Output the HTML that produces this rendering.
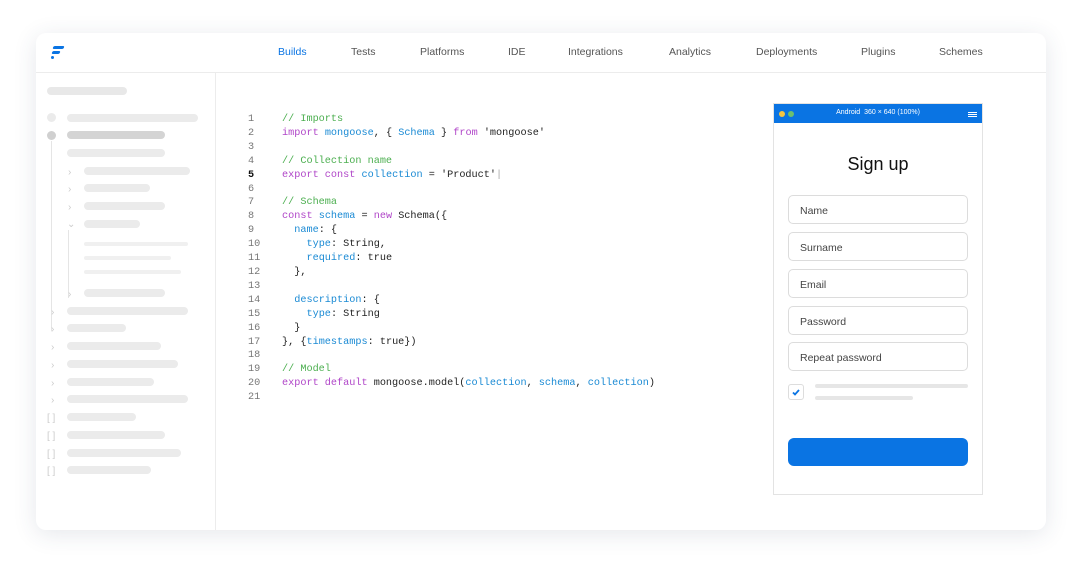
<!DOCTYPE html>
<html><head><style>
*{margin:0;padding:0;box-sizing:border-box}
body{width:1080px;height:570px;background:#fff;font-family:"Liberation Sans",sans-serif;position:relative;overflow:hidden}
.card{position:absolute;left:36px;top:33px;width:1010px;height:497px;background:#fff;border-radius:10px;box-shadow:0 4px 24px rgba(40,60,90,.12);overflow:hidden}
.hdr{position:absolute;left:0;top:0;width:100%;height:40px;border-bottom:1px solid #ececec}
.nav{position:absolute;top:13px;font-size:10.5px;color:#555}
.side{position:absolute;left:179px;top:40px;width:1px;height:457px;background:#ececec}
.b{position:absolute;height:8px;border-radius:4px;background:#ebebeb}
.t{position:absolute;height:4px;border-radius:2px;background:#f0f0f0}
.ch{position:absolute;font-size:10px;color:#ccc;transform:translateY(3px)}
.code{position:absolute;left:212px;top:80px;font-family:"Liberation Mono",monospace;font-size:10.2px;line-height:13.9px;white-space:pre;color:#222}
.ln{position:absolute;left:212px;top:80px;font-family:"Liberation Mono",monospace;font-size:10.2px;line-height:13.9px;color:#777;white-space:pre}
.c{color:#4caf50}.k{color:#b046c8}.v{color:#1a8ad4}
.ph{position:absolute;left:737px;top:70px;width:210px;height:392px;border:1px solid #e3e3e3;background:#fff}
.pb{position:absolute;left:0;top:0;width:100%;height:19px;background:#0a74e3}
.in{position:absolute;left:14px;width:180px;height:29px;border:1px solid #dcdcdc;border-radius:5px;font-size:10.5px;color:#444;padding:9px 11px}
</style></head><body>
<div class="card">
<div class="hdr">
<div style="position:absolute;left:17px;top:13px;width:11px;height:3px;background:#0a74e3;border-radius:2px;transform:skewX(-20deg)"></div>
<div style="position:absolute;left:16px;top:18px;width:8px;height:3px;background:#0a74e3;border-radius:2px;transform:skewX(-20deg)"></div>
<div style="position:absolute;left:15px;top:23px;width:3px;height:3px;background:#0a74e3;border-radius:2px"></div>
<span class="nav" style="left:242px;color:#0a74e3">Builds</span>
<span class="nav" style="left:315px">Tests</span>
<span class="nav" style="left:384px">Platforms</span>
<span class="nav" style="left:472px">IDE</span>
<span class="nav" style="left:532px">Integrations</span>
<span class="nav" style="left:633px">Analytics</span>
<span class="nav" style="left:720px">Deployments</span>
<span class="nav" style="left:825px">Plugins</span>
<span class="nav" style="left:903px">Schemes</span>
</div>
<div class="side"></div>
<div class="b" style="left:11px;top:54px;width:80px;background:#e8e8e8"></div>
<div style="position:absolute;left:11px;top:80px;width:9px;height:9px;border-radius:50%;background:#ebebeb"></div>
<div class="b" style="left:31px;top:81px;width:131px"></div>
<div style="position:absolute;left:11px;top:98px;width:9px;height:9px;border-radius:50%;background:#d0d0d0"></div>
<div class="b" style="left:31px;top:98px;width:98px;background:#d4d4d4"></div>
<div style="position:absolute;left:15px;top:108px;width:1px;height:190px;background:#e5e5e5"></div>
<div class="b" style="left:31px;top:116px;width:98px"></div>
<div class="b" style="left:48px;top:134px;width:106px"></div><span class="ch" style="left:32px;top:131px">›</span>
<div class="b" style="left:48px;top:151px;width:66px"></div><span class="ch" style="left:32px;top:148px">›</span>
<div class="b" style="left:48px;top:169px;width:81px"></div><span class="ch" style="left:32px;top:166px">›</span>
<div class="b" style="left:48px;top:187px;width:56px"></div><span class="ch" style="left:31px;top:183px">⌄</span>
<div style="position:absolute;left:32px;top:197px;width:1px;height:68px;background:#e5e5e5"></div>
<div class="t" style="left:48px;top:209px;width:104px"></div>
<div class="t" style="left:48px;top:223px;width:87px"></div>
<div class="t" style="left:48px;top:237px;width:97px"></div>
<div class="b" style="left:48px;top:256px;width:81px"></div><span class="ch" style="left:32px;top:253px">›</span>
<div class="b" style="left:31px;top:274px;width:121px"></div><span class="ch" style="left:15px;top:271px">›</span>
<div class="b" style="left:31px;top:291px;width:59px"></div><span class="ch" style="left:15px;top:288px">›</span>
<div class="b" style="left:31px;top:309px;width:94px"></div><span class="ch" style="left:15px;top:306px">›</span>
<div class="b" style="left:31px;top:327px;width:111px"></div><span class="ch" style="left:15px;top:324px">›</span>
<div class="b" style="left:31px;top:345px;width:87px"></div><span class="ch" style="left:15px;top:342px">›</span>
<div class="b" style="left:31px;top:362px;width:121px"></div><span class="ch" style="left:15px;top:359px">›</span>
<div class="b" style="left:31px;top:380px;width:69px"></div><span class="ch" style="left:11px;top:377px">[ ]</span>
<div class="b" style="left:31px;top:398px;width:98px"></div><span class="ch" style="left:11px;top:395px">[ ]</span>
<div class="b" style="left:31px;top:416px;width:114px"></div><span class="ch" style="left:11px;top:413px">[ ]</span>
<div class="b" style="left:31px;top:433px;width:84px"></div><span class="ch" style="left:11px;top:430px">[ ]</span>
<div class="ln">1
2
3
4
<b style="color:#111">5</b>
6
7
8
9
10
11
12
13
14
15
16
17
18
19
20
21</div>
<div class="code" style="left:246px"><span class="c">// Imports</span>
<span class="k">import</span> <span class="v">mongoose</span>, { <span class="v">Schema</span> } <span class="k">from</span> 'mongoose'

<span class="c">// Collection name</span>
<span class="k">export const</span> <span class="v">collection</span> = 'Product'<span style="color:#aaa">|</span>

<span class="c">// Schema</span>
<span class="k">const</span> <span class="v">schema</span> = <span class="k">new</span> Schema({
  <span class="v">name</span>: {
    <span class="v">type</span>: String,
    <span class="v">required</span>: true
  },

  <span class="v">description</span>: {
    <span class="v">type</span>: String
  }
}, {<span class="v">timestamps</span>: true})

<span class="c">// Model</span>
<span class="k">export default</span> mongoose.model(<span class="v">collection</span>, <span class="v">schema</span>, <span class="v">collection</span>)</div>
<div class="ph">
<div class="pb">
<div style="position:absolute;left:5px;top:7px;width:6px;height:6px;border-radius:50%;background:#f5c542"></div>
<div style="position:absolute;left:14px;top:7px;width:6px;height:6px;border-radius:50%;background:#6cc070"></div>
<div style="position:absolute;left:0;width:100%;top:5px;text-align:center;color:#fff;font-size:7px">Android&nbsp; 360 × 640 (100%)</div>
<div style="position:absolute;right:5px;top:8px;width:9px;height:5px;border-top:1px solid #fff;border-bottom:1px solid #fff"></div>
<div style="position:absolute;right:5px;top:10px;width:9px;height:1px;background:#fff"></div>
</div>
<div style="position:absolute;left:0;width:100%;top:50px;text-align:center;font-size:18px;color:#111">Sign up</div>
<div class="in" style="top:91px">Name</div>
<div class="in" style="top:128px">Surname</div>
<div class="in" style="top:165px">Email</div>
<div class="in" style="top:202px">Password</div>
<div class="in" style="top:238px">Repeat password</div>
<div style="position:absolute;left:14px;top:280px;width:16px;height:16px;border:1px solid #ddd;border-radius:3px">
<svg width="14" height="14" viewBox="0 0 14 14" style="position:absolute;left:0;top:0"><path d="M4 7.5l2 2 4-4.5" stroke="#0a74e3" stroke-width="1.8" fill="none"/></svg></div>
<div style="position:absolute;left:41px;top:280px;width:153px;height:4px;border-radius:2px;background:#e6e6e6"></div>
<div style="position:absolute;left:41px;top:292px;width:98px;height:4px;border-radius:2px;background:#e6e6e6"></div>
<div style="position:absolute;left:14px;top:334px;width:180px;height:28px;border-radius:6px;background:#0a74e3"></div>
</div>
</div>
</body></html>
